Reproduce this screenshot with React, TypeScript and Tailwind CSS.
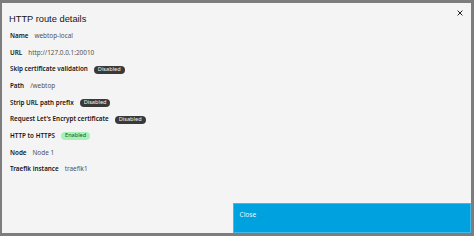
import React from "react";

const font = { fontFamily: '"Noto Sans", "Liberation Sans", sans-serif' };

function Badge({ kind }: { kind: "on" | "off" }) {
  if (kind === "on")
    return (
      <span className="inline-flex h-[8px] items-center rounded-full bg-[#a7f0ba] px-[4px] text-[5.6px] leading-none text-[#0e6027]">
        Enabled
      </span>
    );
  return (
    <span className="inline-flex h-[8px] items-center rounded-full bg-[#393939] px-[4px] text-[5.6px] leading-none text-[#f4f4f4]">
      Disabled
    </span>
  );
}

function Row({ label, value, badge }: { label: string; value?: string; badge?: "on" | "off" }) {
  return (
    <div className="flex h-[16.67px] items-center gap-[6px]">
      <span className="text-[6.3px] font-semibold leading-none text-[#161616]">{label}</span>
      {value && <span className="text-[6.4px] leading-none text-[#525252]">{value}</span>}
      {badge && <Badge kind={badge} />}
    </div>
  );
}

export default function App() {
  return (
    <div style={font} className="flex h-[236px] w-[474px] bg-[#7d7d7d] pb-[3px] pl-[2px] pr-[3px] pt-[3px]">
      <div className="flex flex-1 flex-col bg-[#f4f4f4]">
        <div className="flex items-start justify-between pl-[7px] pr-[8px] pt-[9px]">
          <h2
            style={{ fontFamily: '"Liberation Sans", Arial, sans-serif' }}
            className="text-[9.3px] leading-[14px] text-[#161616]"
          >
            HTTP route details
          </h2>
          <svg width="6" height="6" viewBox="0 0 10 10" className="-mt-[2px]">
            <path d="M1 1 L9 9 M9 1 L1 9" stroke="#161616" strokeWidth="1.6" />
          </svg>
        </div>
        <div className="mt-[2px] flex flex-col pl-[8px]">
          <Row label="Name" value="webtop-local" />
          <Row label="URL" value="http://127.0.0.1:20010" />
          <Row label="Skip certificate validation" badge="off" />
          <Row label="Path" value="/webtop" />
          <Row label="Strip URL path prefix" badge="off" />
          <Row label="Request Let's Encrypt certificate" badge="off" />
          <Row label="HTTP to HTTPS" badge="on" />
          <Row label="Node" value="Node 1" />
          <Row label="Traefik instance" value="traefik1" />
        </div>
        <div className="mt-auto flex h-[30px]">
          <div className="flex-1" />
          <button className="flex flex-1 flex-col items-start justify-start border border-[#46b8e8] bg-[#00a1df] pl-[6px] pt-[7px] text-left text-[6.6px] leading-[8px] text-[#e6f6fd]">
            <span className="block">Close</span>
          </button>
        </div>
      </div>
    </div>
  );
}
